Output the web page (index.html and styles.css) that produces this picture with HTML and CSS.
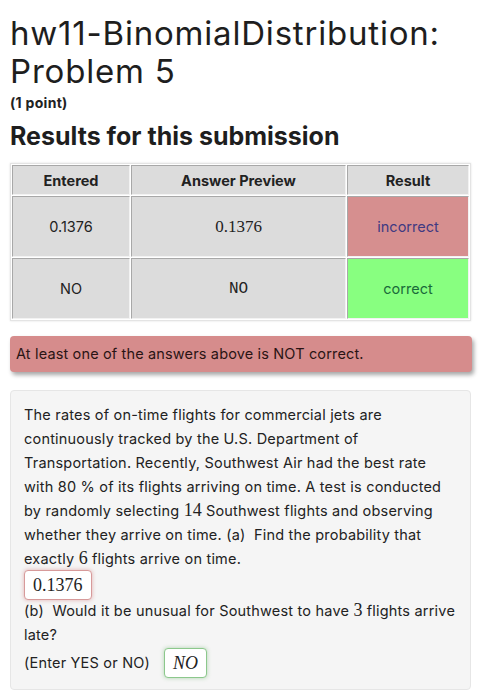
FILE: index.html
```html
<!DOCTYPE html>
<html>
<head>
<meta charset="utf-8">
<link rel="stylesheet" href="styles.css">
</head>
<body>
<div class="page">
  <h1 class="title">hw11-BinomialDistribution: Problem 5</h1>
  <div class="points">(1 point)</div>
  <h2 class="results-title">Results for this submission</h2>
  <table class="results">
    <tr>
      <th class="c1">Entered</th>
      <th class="c2">Answer Preview</th>
      <th class="c3">Result</th>
    </tr>
    <tr class="row">
      <td>0.1376</td>
      <td class="math">0.1376</td>
      <td class="bad">incorrect</td>
    </tr>
    <tr class="row">
      <td>NO</td>
      <td class="mono">NO</td>
      <td class="good">correct</td>
    </tr>
  </table>
  <div class="alert">At least one of the answers above is NOT correct.</div>
  <div class="problem">
    <div class="text">The rates of on-time flights for commercial jets are continuously tracked by the U.S. Department of Transportation. Recently, Southwest Air had the best rate with 80 % of its flights arriving on time. A test is conducted by randomly selecting <span class="mj">14</span> Southwest flights and observing whether they arrive on time. (a)&nbsp; Find the probability that exactly <span class="mj">6</span> flights arrive on time.</div>
    <div class="answer-row"><span class="answer wrong">0.1376</span></div>
    <div class="text">(b)&nbsp; Would it be unusual for Southwest to have <span class="mj">3</span> flights arrive late?</div>
    <div class="answer-row last"><span class="label">(Enter YES or NO)</span><span class="answer right italic">NO</span></div>
  </div>
</div>
</body>
</html>
```

FILE: styles.css
```css
html, body {
  margin: 0;
  padding: 0;
  background: #ffffff;
}
body {
  font-family: Inter, "Liberation Sans", Arial, sans-serif;
  color: #222;
}
.page {
  padding: 0 10px 0 10px;
}
.title {
  margin: 0;
  padding-top: 14px;
  font-size: 33px;
  font-weight: 400;
  line-height: 38px;
  letter-spacing: 0.8px;
  color: #1e1e1e;
  width: 455px;
}
.points {
  font-size: 14px;
  font-weight: 700;
  letter-spacing: 0.3px;
  margin-top: 4px;
  line-height: 18px;
}
.results-title {
  margin: 9px 0 0 0;
  font-size: 25px;
  line-height: 30px;
  font-weight: 700;
  color: #1e1e1e;
}
.results {
  margin-top: 12px;
  border-collapse: separate;
  border-spacing: 1px;
  border: 1px solid #e4e4e4;
  box-shadow: 0 0 2px rgba(0,0,0,0.12);
  width: 461px;
  font-size: 14.5px;
}
.results th, .results td {
  background: #dcdcdc;
  text-align: center;
  border-top: 1px solid #a8a8a8;
  border-left: 1px solid #a8a8a8;
  border-bottom: 1px solid #f2f2f2;
  border-right: 1px solid #f2f2f2;
  padding: 0;
  color: #222;
}
.results th {
  height: 28px;
  font-weight: 700;
}
.results .c1 { width: 116px; }
.results .c2 { width: 213px; }
.results .row td { height: 59px; }
.results .math {
  font-family: "Liberation Serif", "Times New Roman", serif;
  font-size: 17px;
}
.results .mono {
  font-family: "Liberation Mono", "Courier New", monospace;
  font-size: 16px;
}
.results .bad {
  background: #d68f8f;
  color: #3f3a82;
}
.results .good {
  background: #88ff80;
  color: #1a6a3a;
}
.alert {
  margin-top: 15px;
  background: #d68c8c;
  color: #2a1414;
  font-size: 14.5px;
  letter-spacing: 0.15px;
  line-height: 21px;
  padding: 7px 6px 8px 6px;
  border-radius: 4px;
  box-shadow: 2px 3px 4px rgba(0,0,0,0.35);
}
.problem {
  margin-top: 18px;
  background: #f5f5f5;
  border: 1px solid #e6e6e6;
  border-radius: 4px;
  padding: 12px 13px 10px 13px;
  font-size: 14.5px;
  line-height: 24px;
  letter-spacing: 0.2px;
  color: #222;
  width: 433px;
}
.mj {
  font-family: "Liberation Serif", "Times New Roman", serif;
  font-size: 18px;
  line-height: 1;
  letter-spacing: 0;
}
.answer-row {
  display: flex;
  align-items: center;
  height: 28px;
  gap: 14px;
}
.answer {
  display: inline-flex;
  align-items: center;
  height: 28px;
  padding: 0 8px;
  border-radius: 4px;
  background: #fff;
  font-family: "Liberation Serif", "Times New Roman", serif;
  font-size: 18px;
  line-height: 1;
  letter-spacing: 0;
}
.answer.wrong {
  border: 1px solid #d79a9a;
  box-shadow: 0 0 4px rgba(200,90,90,0.45);
}
.answer.right {
  border: 1px solid #8cc88c;
  box-shadow: 0 0 4px rgba(90,170,90,0.45);
}
.italic { font-style: italic; }
.answer-row.last {
  height: 32px;
}
```
